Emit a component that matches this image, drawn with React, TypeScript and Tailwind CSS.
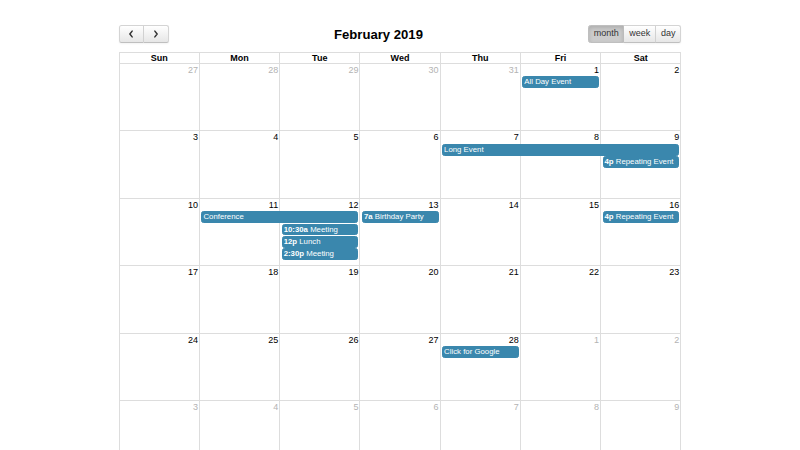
import React from 'react'

type CalEvent = { title: string; time?: string; col: number; span: number; row: number }
type Week = { days: { n: number; other?: boolean }[]; events: CalEvent[] }

const COL_START: Record<number, string> = {
  1: 'col-start-1', 2: 'col-start-2', 3: 'col-start-3', 4: 'col-start-4',
  5: 'col-start-5', 6: 'col-start-6', 7: 'col-start-7',
}
const COL_SPAN: Record<number, string> = {
  1: 'col-span-1', 2: 'col-span-2', 3: 'col-span-3', 4: 'col-span-4',
}
const ROW_START: Record<number, string> = {
  2: 'row-start-2', 3: 'row-start-3', 4: 'row-start-4', 5: 'row-start-5',
}

const dayNames = ['Sun', 'Mon', 'Tue', 'Wed', 'Thu', 'Fri', 'Sat']

const mk = (nums: number[], otherFn: (n: number, i: number) => boolean) =>
  nums.map((n, i) => ({ n, other: otherFn(n, i) }))

const weeks: Week[] = [
  {
    days: mk([27, 28, 29, 30, 31, 1, 2], (_, i) => i < 5),
    events: [{ title: 'All Day Event', col: 6, span: 1, row: 2 }],
  },
  {
    days: mk([3, 4, 5, 6, 7, 8, 9], () => false),
    events: [
      { title: 'Long Event', col: 5, span: 3, row: 2 },
      { title: 'Repeating Event', time: '4p', col: 7, span: 1, row: 3 },
    ],
  },
  {
    days: mk([10, 11, 12, 13, 14, 15, 16], () => false),
    events: [
      { title: 'Conference', col: 2, span: 2, row: 2 },
      { title: 'Birthday Party', time: '7a', col: 4, span: 1, row: 2 },
      { title: 'Repeating Event', time: '4p', col: 7, span: 1, row: 2 },
      { title: 'Meeting', time: '10:30a', col: 3, span: 1, row: 3 },
      { title: 'Lunch', time: '12p', col: 3, span: 1, row: 4 },
      { title: 'Meeting', time: '2:30p', col: 3, span: 1, row: 5 },
    ],
  },
  {
    days: mk([17, 18, 19, 20, 21, 22, 23], () => false),
    events: [],
  },
  {
    days: mk([24, 25, 26, 27, 28, 1, 2], (_, i) => i > 4),
    events: [{ title: 'Click for Google', col: 5, span: 1, row: 2 }],
  },
  {
    days: mk([3, 4, 5, 6, 7, 8, 9], () => true),
    events: [],
  },
]

function Chevron({ left }: { left?: boolean }) {
  return (
    <svg width="6" height="8" viewBox="0 0 10 14" className="block">
      <path
        d={left ? 'M7 2 L3 7 L7 12' : 'M3 2 L7 7 L3 12'}
        fill="none"
        stroke="#333"
        strokeWidth="2.6"
        strokeLinecap="round"
        strokeLinejoin="round"
      />
    </svg>
  )
}

const btn =
  'h-[18.4px] flex items-center justify-center border border-[#d4d4d4] border-b-[#bfbfbf] bg-gradient-to-b from-white to-[#e6e6e6] text-[#333] text-[9px] shadow-[0_1px_2px_rgba(0,0,0,0.05)]'

export default function App() {
  return (
    <div className="h-[450px] overflow-hidden bg-white font-['Liberation_Sans',Arial,sans-serif] text-black">
      <div className="w-[562.5px] mx-auto pt-[25px]">
        {/* Toolbar */}
        <div className="flex items-center justify-between mb-[8.5px]">
          <div className="flex">
            <button className={`${btn} w-[25px] rounded-l-[2.5px]`}>
              <Chevron left />
            </button>
            <button className={`${btn} w-[25px] rounded-r-[2.5px] border-l-0`}>
              <Chevron />
            </button>
          </div>
          <h2 className="text-[13.125px] font-bold leading-none">February 2019</h2>
          <div className="flex">
            <button className="h-[18.4px] w-[36px] flex items-center justify-center border border-[#bfbfbf] bg-[#ccc] text-[#333] text-[9px] rounded-l-[2.5px] shadow-[inset_0_2px_4px_rgba(0,0,0,0.15)]">
              month
            </button>
            <button className={`${btn} w-[32px] border-l-0`}>week</button>
            <button className={`${btn} w-[25px] border-l-0 rounded-r-[2.5px]`}>day</button>
          </div>
        </div>

        {/* Day header */}
        <div className="grid grid-cols-7 border-t border-l border-[#ddd]">
          {dayNames.map((d) => (
            <div
              key={d}
              className="h-[11px] border-r border-b border-[#ddd] text-center text-[9px] font-bold leading-[10px]"
            >
              {d}
            </div>
          ))}
        </div>

        {/* Weeks */}
        <div className="border-l border-[#ddd]">
          {weeks.map((w, wi) => (
            <div
              key={wi}
              className="grid grid-cols-7 grid-rows-[auto_auto_auto_auto_auto_1fr] h-[67.5px]"
            >
              {w.days.map((d, i) => (
                <div
                  key={`bg-${i}`}
                  className={`${COL_START[i + 1]} row-[1/7] border-r border-b border-[#ddd]`}
                />
              ))}
              {w.days.map((d, i) => (
                <div
                  key={`n-${i}`}
                  className={`${COL_START[i + 1]} row-start-1 text-right text-[9px] leading-[10px] px-[2px] pt-[1px] pb-[1px] ${
                    d.other ? 'text-[#b3b3b3]' : 'text-black'
                  }`}
                >
                  {d.n}
                </div>
              ))}
              {w.events.map((e, ei) => (
                <div
                  key={`e-${ei}`}
                  className={`${COL_START[e.col]} ${COL_SPAN[e.span]} ${ROW_START[e.row]} mt-[0.5px] ml-[1.5px] mr-[2px] px-[1px] rounded-[2.5px] border border-[#3a87ad] bg-[#3a87ad] text-white text-[7.8px] leading-[9.7px] whitespace-nowrap overflow-hidden`}
                >
                  {e.time && <span className="font-bold">{e.time} </span>}
                  <span>{e.title}</span>
                </div>
              ))}
            </div>
          ))}
        </div>
      </div>
    </div>
  )
}
